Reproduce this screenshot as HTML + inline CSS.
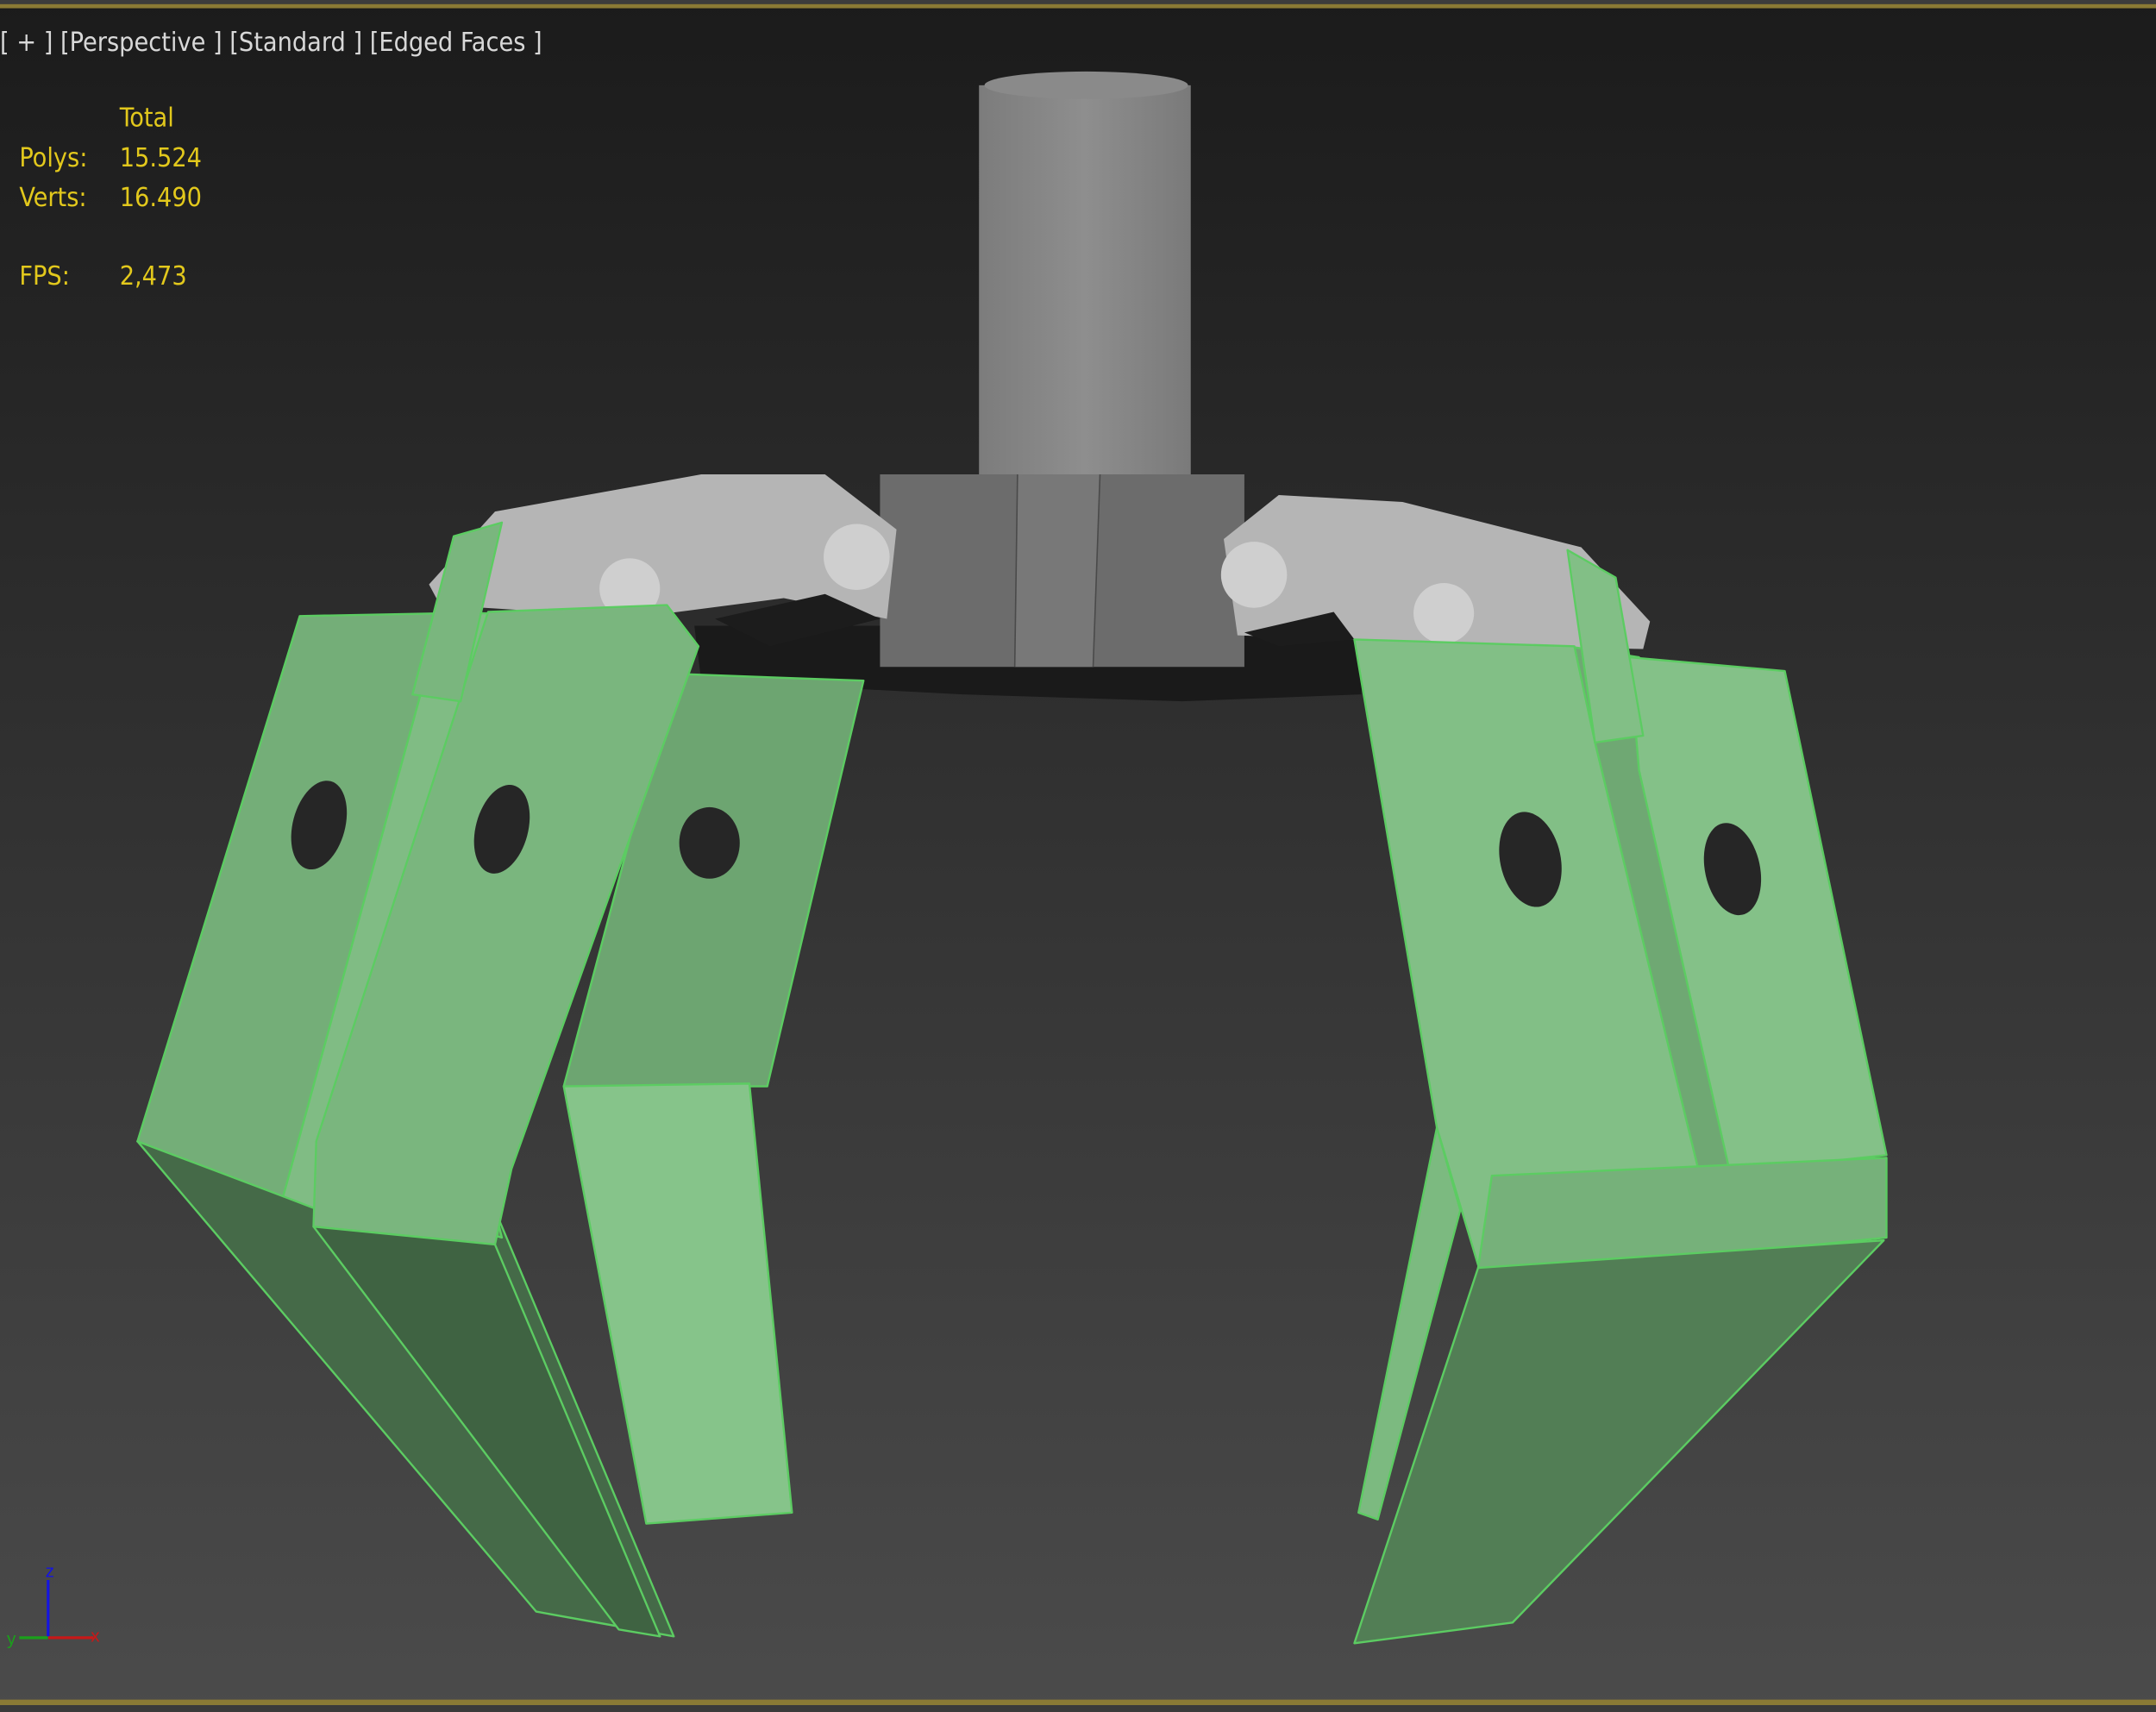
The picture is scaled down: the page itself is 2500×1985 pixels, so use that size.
<!DOCTYPE html>
<html><head><meta charset="utf-8"><style>
html,body{margin:0;padding:0;background:#222;}
svg{display:block}
</style></head><body>
<svg width="2500" height="1985" viewBox="0 0 1568 1245" preserveAspectRatio="none" xmlns="http://www.w3.org/2000/svg">
<defs>
<linearGradient id="bg" x1="0" y1="0" x2="0" y2="1">
<stop offset="0" stop-color="#1b1b1b"/><stop offset="0.5" stop-color="#333"/><stop offset="1" stop-color="#4b4b4b"/>
</linearGradient>
<linearGradient id="shaft" x1="0" y1="0" x2="1" y2="0">
<stop offset="0" stop-color="#7c7c7c"/><stop offset="0.5" stop-color="#8e8e8e"/><stop offset="1" stop-color="#7a7a7a"/>
</linearGradient>
</defs>
<rect width="1568" height="1245" fill="url(#bg)"/>
<rect width="1568" height="3" fill="#3c3c3c"/>
<rect y="3" width="1568" height="3" fill="#8a7a35"/>
<rect y="1236" width="1568" height="4" fill="#8a7a35"/>
<rect y="1240" width="1568" height="5" fill="#3a3a3a"/>

<g font-family="Tahoma,'DejaVu Sans Condensed','Liberation Sans',sans-serif" font-size="19">
<text x="0" y="37" fill="#d8d8d8" font-size="19">[ + ] [Perspective ] [Standard ] [Edged Faces ]</text>
<g fill="#e2c81c">
<text x="87" y="92">Total</text>
<text x="14" y="121">Polys:</text><text x="87" y="121">15.524</text>
<text x="14" y="150">Verts:</text><text x="87" y="150">16.490</text>
<text x="14" y="207">FPS:</text><text x="87" y="207">2,473</text>
</g>
</g>

<line x1="35" y1="1149" x2="35" y2="1192" stroke="#1515e0" stroke-width="2"/>
<line x1="14" y1="1191" x2="35" y2="1191" stroke="#1aa01a" stroke-width="2"/>
<line x1="35" y1="1191" x2="68" y2="1191" stroke="#c81818" stroke-width="2"/>
<text x="33" y="1147" fill="#1515e0" font-size="13" font-family="'Liberation Sans',sans-serif">z</text>
<text x="66" y="1194" fill="#c81818" font-size="13" font-family="'Liberation Sans',sans-serif">x</text>
<text x="5" y="1196" fill="#1aa01a" font-size="13" font-family="'Liberation Sans',sans-serif">y</text>

<rect x="712" y="62" width="154" height="290" fill="url(#shaft)"/>
<ellipse cx="790" cy="62" rx="74" ry="10" fill="#8a8a8a"/>
<polygon points="505,455 995,455 990,505 860,510 700,505 510,495" fill="#1a1a1a"/>
<polygon points="640,345 905,345 905,485 640,485" fill="#6c6c6c"/>
<polygon points="740,345 800,345 795,485 738,485" fill="#787878"/>
<line x1="740" y1="345" x2="738" y2="485" stroke="#4a4a4a"/>
<line x1="800" y1="345" x2="795" y2="485" stroke="#4a4a4a"/>
<polygon points="312,425 360,372 510,345 600,345 652,385 645,450 570,435 470,448 400,445 320,440" fill="#b5b5b5"/>
<polygon points="520,450 600,432 640,450 560,470" fill="#1c1c1c"/>
<circle cx="623" cy="405" r="24" fill="#cfcfcf"/>
<circle cx="458" cy="428" r="22" fill="#cfcfcf"/>
<polygon points="890,392 930,360 1020,365 1150,398 1200,452 1195,472 1100,470 980,465 900,462" fill="#b5b5b5"/>
<polygon points="905,460 970,445 985,465 930,470" fill="#1c1c1c"/>
<circle cx="912" cy="418" r="24" fill="#cfcfcf"/>
<circle cx="1050" cy="446" r="22" fill="#cfcfcf"/>

<g stroke="#5ccc62" stroke-width="1.5" stroke-linejoin="round">
<polygon points="490,490 628,495 558,790 410,790" fill="#6da571"/>
<polygon points="410,790 545,788 576,1100 470,1108" fill="#86c48a"/>
<polygon points="100,830 360,880 490,1190 390,1172" fill="#456a48"/>
<polygon points="100,830 225,860 365,900 360,880" fill="#5d915f"/>
<polygon points="218,448 322,446 206,870 100,830" fill="#74ae78"/>
<polygon points="322,446 355,446 232,880 206,870" fill="#80bc84"/>
<polygon points="355,445 485,440 508,470 372,850 360,905 228,892 230,830" fill="#7ab67e"/>
<polygon points="228,892 360,905 480,1190 450,1185" fill="#3f6342"/>
<polygon points="300,505 330,390 365,380 335,510" fill="#7ab67e"/>
<polygon points="1045,820 1062,880 1002,1105 988,1100" fill="#7cba80"/>
<polygon points="1140,470 1192,478 1262,852 1232,856" fill="#6fa873"/>
<polygon points="985,465 1145,470 1160,540 1235,850 1088,860 1075,920 1045,820" fill="#82bf86"/>
<polygon points="1185,478 1298,488 1372,840 1258,852 1192,560" fill="#84c188"/>
<polygon points="1140,400 1175,420 1195,535 1160,540" fill="#82bf86"/>
<polygon points="1085,855 1372,842 1372,900 1250,912 1075,922" fill="#76b17a"/>
<polygon points="1075,922 1370,902 1100,1180 985,1195" fill="#527e55"/>
</g>
<g fill="#262626">
<ellipse cx="232" cy="600" rx="19" ry="33" transform="rotate(15 232 600)"/>
<ellipse cx="365" cy="603" rx="19" ry="33" transform="rotate(15 365 603)"/>
<ellipse cx="516" cy="613" rx="22" ry="26"/>
<ellipse cx="1113" cy="625" rx="22" ry="35" transform="rotate(-12 1113 625)"/>
<ellipse cx="1260" cy="632" rx="20" ry="34" transform="rotate(-12 1260 632)"/>
</g>
</svg>
</body></html>
